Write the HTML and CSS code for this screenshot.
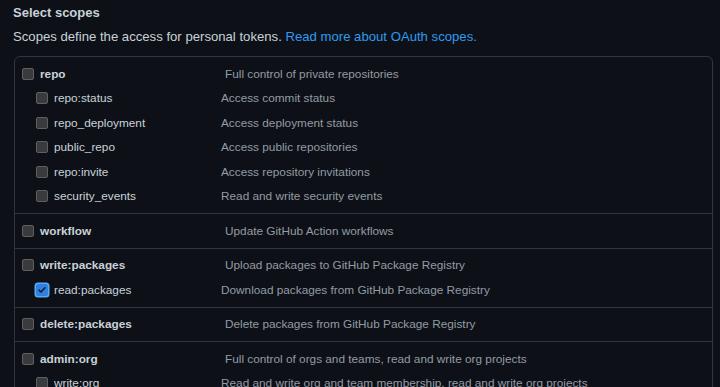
FILE: index.html
```html
<!DOCTYPE html>
<html>
<head>
<meta charset="utf-8">
<link rel="stylesheet" href="styles.css">
</head>
<body>
<h3 class="title">Select scopes</h3>
<p class="lead">Scopes define the access for personal tokens. <a href="#" class="link">Read more about OAuth scopes.</a></p>
<div class="scopes">
  <div class="group">
    <div class="row top"><span class="cb"></span><span class="name">repo</span><span class="desc">Full control of private repositories</span></div>
    <div class="row child"><span class="cb"></span><span class="name">repo:status</span><span class="desc">Access commit status</span></div>
    <div class="row child"><span class="cb"></span><span class="name">repo_deployment</span><span class="desc">Access deployment status</span></div>
    <div class="row child"><span class="cb"></span><span class="name">public_repo</span><span class="desc">Access public repositories</span></div>
    <div class="row child"><span class="cb"></span><span class="name">repo:invite</span><span class="desc">Access repository invitations</span></div>
    <div class="row child"><span class="cb"></span><span class="name">security_events</span><span class="desc">Read and write security events</span></div>
  </div>
  <div class="group">
    <div class="row top"><span class="cb"></span><span class="name">workflow</span><span class="desc">Update GitHub Action workflows</span></div>
  </div>
  <div class="group">
    <div class="row top"><span class="cb"></span><span class="name">write:packages</span><span class="desc">Upload packages to GitHub Package Registry</span></div>
    <div class="row child"><span class="cb checked"><svg viewBox="0 0 12 12" width="10" height="10"><path d="M2.5 6.2 L4.8 8.5 L9.5 3.3" fill="none" stroke="#0d1a2b" stroke-width="1.8" stroke-linecap="round" stroke-linejoin="round"/></svg></span><span class="name">read:packages</span><span class="desc">Download packages from GitHub Package Registry</span></div>
  </div>
  <div class="group">
    <div class="row top"><span class="cb"></span><span class="name">delete:packages</span><span class="desc">Delete packages from GitHub Package Registry</span></div>
  </div>
  <div class="group">
    <div class="row top"><span class="cb"></span><span class="name">admin:org</span><span class="desc">Full control of orgs and teams, read and write org projects</span></div>
    <div class="row child"><span class="cb"></span><span class="name">write:org</span><span class="desc">Read and write org and team membership, read and write org projects</span></div>
  </div>
</div>
</body>
</html>
```
FILE: styles.css
```css
html, body {
  margin: 0;
  background: #0d1117;
}
body {
  height: 387px;
  overflow: hidden;
  padding: 0 0 0 13px;
  font-family: "Liberation Sans", Arial, sans-serif;
  color: #c9d1d9;
}
.title {
  margin: 4px 0 0;
  font-size: 13px;
  line-height: 18px;
  font-weight: bold;
  color: #c9d1d9;
}
.lead {
  margin: 6px 0 10px;
  font-size: 13.15px;
  line-height: 18px;
  color: #c9d1d9;
}
.link {
  color: #2f9bf0;
  text-decoration: none;
}
.scopes {
  margin-left: 1px;
  width: 697px;
  border: 1px solid #30363d;
  border-radius: 6px;
}
.group {
  padding: 4.5px 0;
  border-top: 1px solid #30363d;
}
.group:first-child {
  border-top: none;
}
.row {
  display: flex;
  align-items: center;
  height: 24.5px;
  font-size: 11.8px;
}
.row.top {
  padding-left: 7px;
}
.row.child {
  padding-left: 21px;
}
.cb {
  flex: none;
  width: 10px;
  height: 10px;
  border: 1px solid #5d5f62;
  background: #3a3b3d;
  border-radius: 2px;
  margin-right: 6px;
  display: flex;
  align-items: center;
  justify-content: center;
}
.cb.checked {
  background: #2f80e0;
  border: 1px solid #2f80e0;
  box-shadow: 0 0 0 1.5px #5aa9f6;
}
.name {
  flex: none;
  color: #c9d1d9;
}
.row.top .name {
  width: 185px;
  font-weight: bold;
}
.row.child .name {
  width: 167px;
}
.desc {
  color: #939ba4;
  white-space: nowrap;
}
```
